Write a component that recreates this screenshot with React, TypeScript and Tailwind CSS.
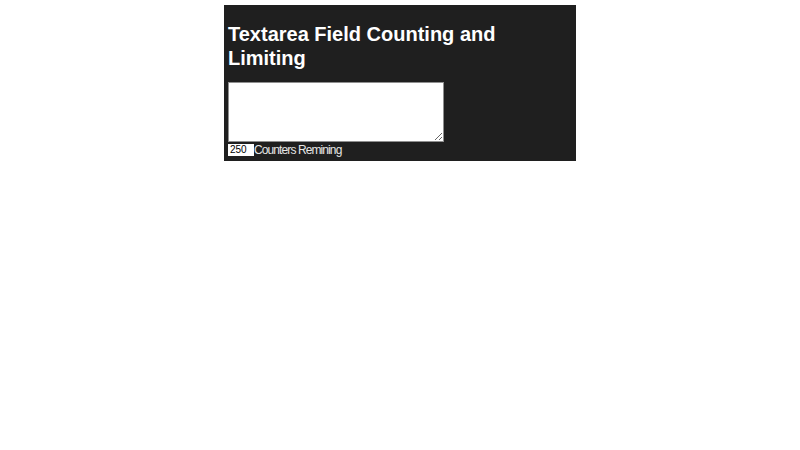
export default function App() {
  return (
    <main className="bg-white min-h-screen pt-[5px] font-['Liberation_Sans',Arial,sans-serif]">
      <div className="w-[352px] mx-auto bg-[#1f1f1f] px-[4px] pt-[17px] pb-[4px]">
        <h1 className="text-[20px] leading-[24px] font-bold text-white mb-[12px]">
          Textarea Field Counting and Limiting
        </h1>

        <textarea className="block w-[216px] h-[60px] bg-white border border-[#8f8f8f] resize p-[2px] text-[13px] text-black" />

        <div className="flex items-center mt-[1px]">
          <input
            type="text"
            readOnly
            value="250"
            className="w-[26px] h-[12px] bg-white text-black text-[10px] leading-[12px] px-[2px] outline-none"
          />
          <span className="text-[12px] leading-[14px] tracking-[-0.9px] text-[#e6e6e6]">Counters Remining</span>
        </div>
      </div>
    </main>
  );
}
